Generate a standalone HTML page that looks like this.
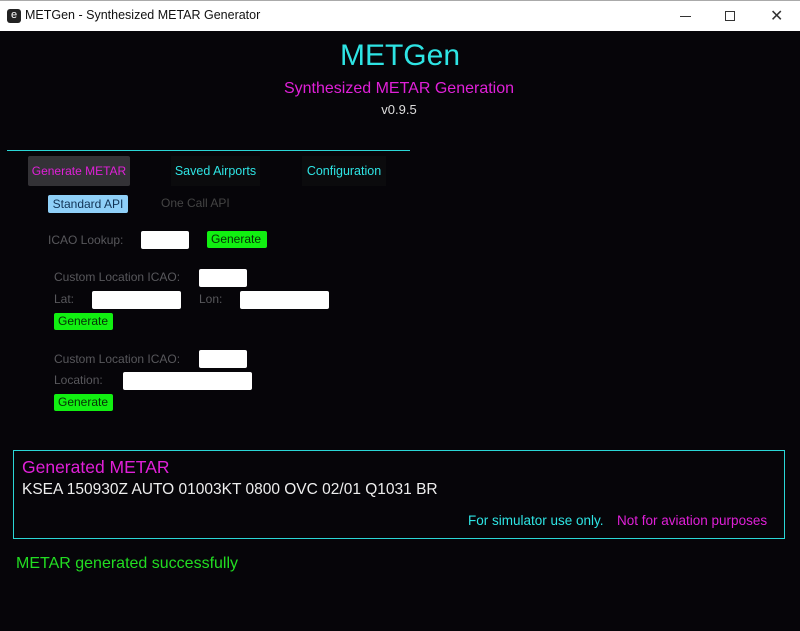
<!DOCTYPE html>
<html><head><style>
*{margin:0;padding:0;box-sizing:border-box}
body{width:800px;height:631px;background:#060509;font-family:"Liberation Sans","DejaVu Sans",sans-serif;position:relative;overflow:hidden}
.a{position:absolute;white-space:nowrap}
.tb{position:absolute;left:0;top:0;width:800px;height:31px;background:#fff;border-top:1px solid #aaa}
.lbl{color:#58585c;font-size:12px}
.in{position:absolute;background:#fff;border-radius:2px;height:18px}
.gen{position:absolute;background:#11f011;color:#063006;font-size:12px;border-radius:2px;height:17px;line-height:17px;padding:0 4px}
</style></head><body>
<div class="tb">
<div class="a" style="left:7px;top:8px;width:14px;height:14px;background:#222;border-radius:3px;color:#fff;font-size:11px;line-height:13px;text-align:center">e</div>
<div class="a" style="left:25px;top:7px;font-size:12.5px;color:#111">METGen - Synthesized METAR Generator</div>
<div class="a" style="left:680px;top:15px;width:11px;height:1px;background:#333"></div>
<div class="a" style="left:725px;top:10px;width:10px;height:10px;border:1px solid #333"></div>
<div class="a" style="left:770px;top:5px;font-size:16px;color:#333">✕</div>
</div>
<div class="a" style="left:0;width:800px;text-align:center;top:39px;font-size:30px;color:#2ee4e4">METGen</div>
<div class="a" style="left:0;width:798px;text-align:center;top:80px;font-size:16px;color:#e020d8">Synthesized METAR Generation</div>
<div class="a" style="left:0;width:798px;text-align:center;top:102px;font-size:13px;color:#ddd">v0.9.5</div>
<div class="a" style="left:7px;top:150px;width:403px;height:1px;background:#2ad6d6"></div>
<div class="a" style="left:28px;top:156px;width:102px;height:30px;background:#333236;border-radius:2px;color:#e020d8;font-size:12px;line-height:30px;text-align:center">Generate METAR</div>
<div class="a" style="left:171px;top:156px;width:89px;height:30px;background:#0b0b0d;color:#2ee4e4;font-size:12.5px;line-height:30px;text-align:center">Saved Airports</div>
<div class="a" style="left:302px;top:156px;width:84px;height:30px;background:#0b0b0d;color:#2ee4e4;font-size:12.5px;line-height:30px;text-align:center">Configuration</div>
<div class="a" style="left:48px;top:195px;width:80px;height:18px;background:#8fd0f8;border-radius:2px;color:#135;font-size:12px;line-height:18px;text-align:center">Standard API</div>
<div class="a lbl" style="left:161px;top:196px;color:#444">One Call API</div>
<div class="a lbl" style="left:48px;top:233px">ICAO Lookup:</div>
<div class="in" style="left:141px;top:231px;width:48px"></div>
<div class="gen" style="left:207px;top:231px;width:60px">Generate</div>
<div class="a lbl" style="left:54px;top:270px">Custom Location ICAO:</div>
<div class="in" style="left:199px;top:269px;width:48px"></div>
<div class="a lbl" style="left:54px;top:292px">Lat:</div>
<div class="in" style="left:92px;top:291px;width:89px"></div>
<div class="a lbl" style="left:199px;top:292px">Lon:</div>
<div class="in" style="left:240px;top:291px;width:89px"></div>
<div class="gen" style="left:54px;top:313px;width:59px">Generate</div>
<div class="a lbl" style="left:54px;top:352px">Custom Location ICAO:</div>
<div class="in" style="left:199px;top:350px;width:48px"></div>
<div class="a lbl" style="left:54px;top:373px">Location:</div>
<div class="in" style="left:123px;top:372px;width:129px"></div>
<div class="gen" style="left:54px;top:394px;width:59px">Generate</div>
<div class="a" style="left:13px;top:450px;width:772px;height:89px;border:1px solid #2ad6d6"></div>
<div class="a" style="left:22px;top:457px;font-size:17.5px;color:#e020d8">Generated METAR</div>
<div class="a" style="left:22px;top:481px;font-size:15.5px;color:#eee">KSEA 150930Z AUTO 01003KT 0800 OVC 02/01 Q1031 BR</div>
<div class="a" style="left:468px;top:513px;font-size:13.5px;color:#2ee4e4">For simulator use only.</div>
<div class="a" style="left:617px;top:513px;font-size:13.5px;color:#e020d8">Not for aviation purposes</div>
<div class="a" style="left:16px;top:555px;font-size:16px;color:#22dd22">METAR generated successfully</div>
</body></html>
